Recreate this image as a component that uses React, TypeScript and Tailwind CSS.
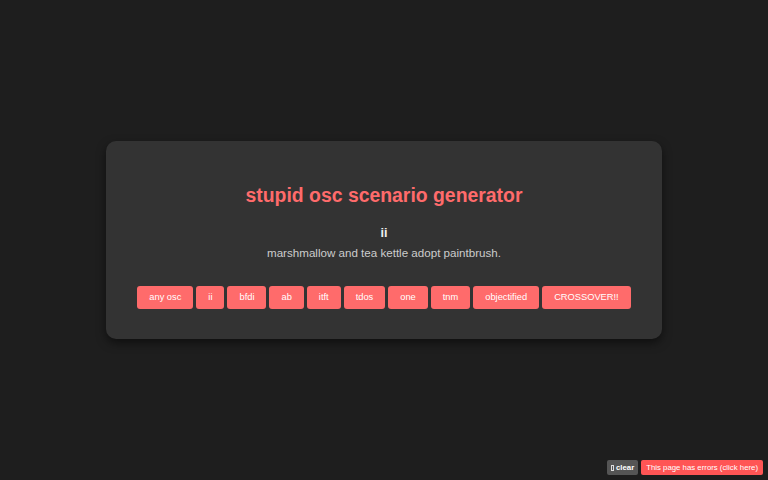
import React from "react";

const shows = ["any osc", "ii", "bfdi", "ab", "itft", "tdos", "one", "tnm", "objectified", "CROSSOVER!!"];

export default function App() {
  return (
    <div
      className="relative flex h-[480px] w-full items-center justify-center bg-[#1e1e1e]"
      style={{ fontFamily: '"Liberation Sans", Arial, sans-serif' }}
    >
      <div className="flex w-[556px] flex-col items-center rounded-[10px] bg-[#333333] pt-[43px] pb-[30px] shadow-[0_4px_10px_rgba(0,0,0,0.5)]">
        <h1 className="text-[19.4px] font-bold leading-[23px] text-[#ff6b6b]">stupid osc scenario generator</h1>
        <div className="mt-[19px] text-[12.6px] font-bold leading-[15px] text-[#eeeeee]">ii</div>
        <p className="mt-[5px] text-[11.6px] leading-[14px] text-[#cccccc]">marshmallow and tea kettle adopt paintbrush.</p>
        <div className="mt-[26px] flex gap-[3px]">
          {shows.map((s) => (
            <button
              key={s}
              className="h-[23px] rounded-[3px] bg-[#ff6b6b] px-3 text-[9.3px] leading-none text-white"
            >
              {s}
            </button>
          ))}
        </div>
      </div>
      <div className="absolute right-[5px] bottom-[5px] flex gap-[3px] text-[7.8px] leading-none">
        <span className="flex h-[15px] items-center gap-[2px] rounded-[2px] bg-[#555555] px-[4px] font-bold text-white">
          <span className="inline-block h-[6px] w-[3px] border border-white/80" />
          clear
        </span>
        <span className="flex h-[15px] items-center rounded-[2px] bg-[#ff5555] px-[5px] text-white">
          This page has errors (click here)
        </span>
      </div>
    </div>
  );
}
